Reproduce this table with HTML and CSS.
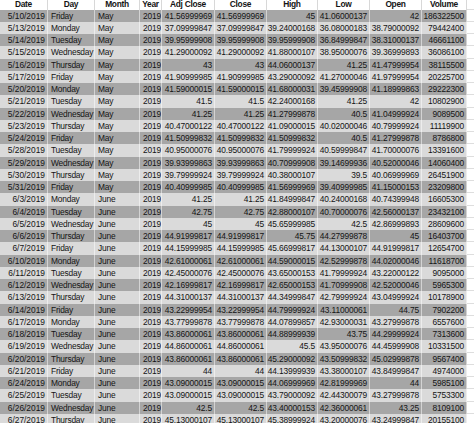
FILE: index.html
```html
<!DOCTYPE html>
<html lang="en">
<head>
<meta charset="utf-8">
<title>Stock prices</title>
<link rel="stylesheet" href="styles.css">
</head>
<body>
<div class="sheet">
<div class="row head"><span>Date</span><span>Day</span><span>Month</span><span>Year</span><span>Adj Close</span><span>Close</span><span>High</span><span>Low</span><span>Open</span><span>Volume</span></div>
<div class="row dark"><span>5/10/2019</span><span>Friday</span><span>May</span><span>2019</span><span>41.56999969</span><span>41.56999969</span><span>45</span><span>41.06000137</span><span>42</span><span>186322500</span></div>
<div class="row light"><span>5/13/2019</span><span>Monday</span><span>May</span><span>2019</span><span>37.09999847</span><span>37.09999847</span><span>39.24000168</span><span>36.08000183</span><span>38.79000092</span><span>79442400</span></div>
<div class="row dark"><span>5/14/2019</span><span>Tuesday</span><span>May</span><span>2019</span><span>39.95999908</span><span>39.95999908</span><span>39.95999908</span><span>36.84999847</span><span>38.31000137</span><span>46661100</span></div>
<div class="row light"><span>5/15/2019</span><span>Wednesday</span><span>May</span><span>2019</span><span>41.29000092</span><span>41.29000092</span><span>41.88000107</span><span>38.95000076</span><span>39.36999893</span><span>36086100</span></div>
<div class="row dark"><span>5/16/2019</span><span>Thursday</span><span>May</span><span>2019</span><span>43</span><span>43</span><span>44.06000137</span><span>41.25</span><span>41.47999954</span><span>38115500</span></div>
<div class="row light"><span>5/17/2019</span><span>Friday</span><span>May</span><span>2019</span><span>41.90999985</span><span>41.90999985</span><span>43.29000092</span><span>41.27000046</span><span>41.97999954</span><span>20225700</span></div>
<div class="row dark"><span>5/20/2019</span><span>Monday</span><span>May</span><span>2019</span><span>41.59000015</span><span>41.59000015</span><span>41.68000031</span><span>39.45999908</span><span>41.18999863</span><span>29222300</span></div>
<div class="row light"><span>5/21/2019</span><span>Tuesday</span><span>May</span><span>2019</span><span>41.5</span><span>41.5</span><span>42.24000168</span><span>41.25</span><span>42</span><span>10802900</span></div>
<div class="row dark"><span>5/22/2019</span><span>Wednesday</span><span>May</span><span>2019</span><span>41.25</span><span>41.25</span><span>41.27999878</span><span>40.5</span><span>41.04999924</span><span>9089500</span></div>
<div class="row light"><span>5/23/2019</span><span>Thursday</span><span>May</span><span>2019</span><span>40.47000122</span><span>40.47000122</span><span>41.09000015</span><span>40.02000046</span><span>40.79999924</span><span>11119900</span></div>
<div class="row dark"><span>5/24/2019</span><span>Friday</span><span>May</span><span>2019</span><span>41.50999832</span><span>41.50999832</span><span>41.50999832</span><span>40.5</span><span>41.27999878</span><span>8786800</span></div>
<div class="row light"><span>5/28/2019</span><span>Tuesday</span><span>May</span><span>2019</span><span>40.95000076</span><span>40.95000076</span><span>41.79999924</span><span>40.59999847</span><span>41.70000076</span><span>13391600</span></div>
<div class="row dark"><span>5/29/2019</span><span>Wednesday</span><span>May</span><span>2019</span><span>39.93999863</span><span>39.93999863</span><span>40.70999908</span><span>39.14699936</span><span>40.52000046</span><span>14060400</span></div>
<div class="row light"><span>5/30/2019</span><span>Thursday</span><span>May</span><span>2019</span><span>39.79999924</span><span>39.79999924</span><span>40.38000107</span><span>39.5</span><span>40.06999969</span><span>26451900</span></div>
<div class="row dark"><span>5/31/2019</span><span>Friday</span><span>May</span><span>2019</span><span>40.40999985</span><span>40.40999985</span><span>41.56999969</span><span>39.40999985</span><span>41.15000153</span><span>23209800</span></div>
<div class="row light"><span>6/3/2019</span><span>Monday</span><span>June</span><span>2019</span><span>41.25</span><span>41.25</span><span>41.84999847</span><span>40.24000168</span><span>40.74399948</span><span>16605300</span></div>
<div class="row dark"><span>6/4/2019</span><span>Tuesday</span><span>June</span><span>2019</span><span>42.75</span><span>42.75</span><span>42.88000107</span><span>40.70000076</span><span>42.56000137</span><span>23432100</span></div>
<div class="row light"><span>6/5/2019</span><span>Wednesday</span><span>June</span><span>2019</span><span>45</span><span>45</span><span>45.65999985</span><span>42.5</span><span>42.86999893</span><span>28609600</span></div>
<div class="row dark"><span>6/6/2019</span><span>Thursday</span><span>June</span><span>2019</span><span>44.91999817</span><span>44.91999817</span><span>45.75</span><span>44.27999878</span><span>45</span><span>16403700</span></div>
<div class="row light"><span>6/7/2019</span><span>Friday</span><span>June</span><span>2019</span><span>44.15999985</span><span>44.15999985</span><span>45.66999817</span><span>44.13000107</span><span>44.91999817</span><span>12654700</span></div>
<div class="row dark"><span>6/10/2019</span><span>Monday</span><span>June</span><span>2019</span><span>42.61000061</span><span>42.61000061</span><span>44.59000015</span><span>42.52999878</span><span>44.02000046</span><span>11618700</span></div>
<div class="row light"><span>6/11/2019</span><span>Tuesday</span><span>June</span><span>2019</span><span>42.45000076</span><span>42.45000076</span><span>43.65000153</span><span>41.79999924</span><span>43.22000122</span><span>9095000</span></div>
<div class="row dark"><span>6/12/2019</span><span>Wednesday</span><span>June</span><span>2019</span><span>42.16999817</span><span>42.16999817</span><span>42.65000153</span><span>41.70999908</span><span>42.52000046</span><span>5965300</span></div>
<div class="row light"><span>6/13/2019</span><span>Thursday</span><span>June</span><span>2019</span><span>44.31000137</span><span>44.31000137</span><span>44.34999847</span><span>42.79999924</span><span>43.04999924</span><span>10178900</span></div>
<div class="row dark"><span>6/14/2019</span><span>Friday</span><span>June</span><span>2019</span><span>43.22999954</span><span>43.22999954</span><span>44.79999924</span><span>43.11000061</span><span>44.75</span><span>7902200</span></div>
<div class="row light"><span>6/17/2019</span><span>Monday</span><span>June</span><span>2019</span><span>43.77999878</span><span>43.77999878</span><span>44.07899857</span><span>42.93000031</span><span>43.27999878</span><span>6557600</span></div>
<div class="row dark"><span>6/18/2019</span><span>Tuesday</span><span>June</span><span>2019</span><span>43.86000061</span><span>43.86000061</span><span>44.88999939</span><span>43.75</span><span>44.29999924</span><span>7313600</span></div>
<div class="row light"><span>6/19/2019</span><span>Wednesday</span><span>June</span><span>2019</span><span>44.86000061</span><span>44.86000061</span><span>45.5</span><span>43.95000076</span><span>44.45999908</span><span>10331500</span></div>
<div class="row dark"><span>6/20/2019</span><span>Thursday</span><span>June</span><span>2019</span><span>43.86000061</span><span>43.86000061</span><span>45.29000092</span><span>43.50999832</span><span>45.02999878</span><span>9567400</span></div>
<div class="row light"><span>6/21/2019</span><span>Friday</span><span>June</span><span>2019</span><span>44</span><span>44</span><span>44.13999939</span><span>43.38000107</span><span>43.84999847</span><span>4974000</span></div>
<div class="row dark"><span>6/24/2019</span><span>Monday</span><span>June</span><span>2019</span><span>43.09000015</span><span>43.09000015</span><span>44.06999969</span><span>42.81999969</span><span>44</span><span>5985100</span></div>
<div class="row light"><span>6/25/2019</span><span>Tuesday</span><span>June</span><span>2019</span><span>43.09000015</span><span>43.09000015</span><span>43.79000092</span><span>42.44300079</span><span>43.27999878</span><span>5753300</span></div>
<div class="row dark"><span>6/26/2019</span><span>Wednesday</span><span>June</span><span>2019</span><span>42.5</span><span>42.5</span><span>43.40000153</span><span>42.36000061</span><span>43.25</span><span>8109100</span></div>
<div class="row light"><span>6/27/2019</span><span>Thursday</span><span>June</span><span>2019</span><span>45.13000107</span><span>45.13000107</span><span>45.38999924</span><span>43.20000076</span><span>43.24999847</span><span>20155100</span></div>
</div>
</body>
</html>
```
FILE: styles.css
```css
html, body {
  margin: 0;
  padding: 0;
  background: #ffffff;
}

body {
  font-family: "Liberation Sans", Arial, sans-serif;
  font-size: 8.4px;
  color: #141414;
}

.sheet {
  width: 474px;
  height: 423px;
  overflow: hidden;
}

.row {
  display: grid;
  grid-template-columns: 48px 47px 45px 22px 53px 52px 51px 52px 52px 45px 7px;
  height: 12.25px;
  line-height: 12.25px;
}

.row > span {
  white-space: nowrap;
  overflow: hidden;
  padding: 0 2px 0 0;
  text-align: right;
  border-right: 1px solid rgba(255, 255, 255, 0.5);
}

.row > span:nth-child(2),
.row > span:nth-child(3) {
  text-align: left;
  padding: 0 0 0 3px;
  letter-spacing: -0.2px;
}

.row > span:nth-child(4) {
  padding-right: 0;
  letter-spacing: -0.15px;
}

.row > span:nth-child(n+5) {
  letter-spacing: -0.15px;
}

.row::after {
  content: "";
  background: #ffffff;
  border-bottom: 1px solid #dedede;
}

.dark > span {
  background: #a6a6a6;
}

.light > span {
  background: #dadada;
}

.head {
  height: 9.6px;
  line-height: 8px;
  font-weight: bold;
}

.head > span,
.head > span:nth-child(2),
.head > span:nth-child(3),
.head > span:nth-child(4),
.head > span:nth-child(n+5) {
  text-align: center;
  padding: 0;
  background: #ffffff;
  border-right: 1px solid #d8d8d8;
  letter-spacing: -0.3px;
}
```
